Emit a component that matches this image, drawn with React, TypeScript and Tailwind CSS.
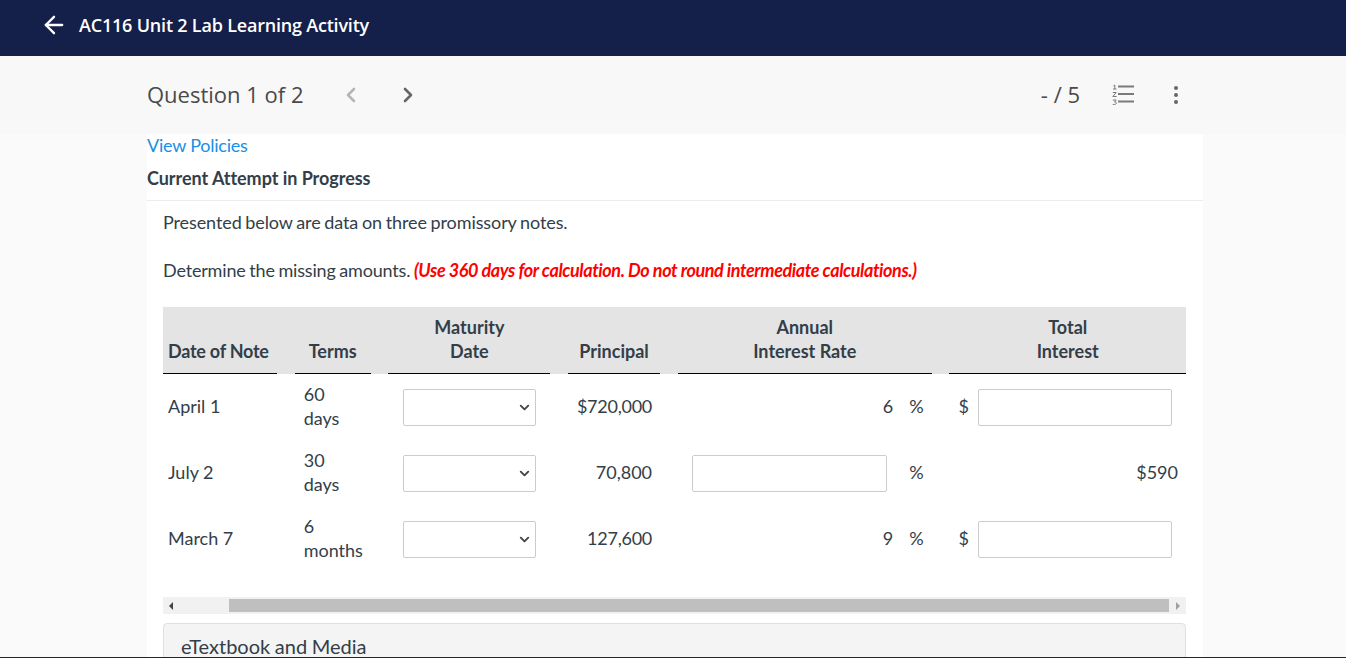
import { ArrowLeft, ChevronLeft, ChevronRight, ChevronDown } from "lucide-react";

const lato = "font-['Lato',sans-serif]";

function SelectBox() {
  return (
    <div className="h-[37px] w-[133px] rounded-[2px] border border-[#cccccc] bg-white flex items-center justify-end pr-[3px]">
      <ChevronDown size={15} strokeWidth={3} className="text-[#444]" />
    </div>
  );
}

function TextBox({ className }: { className: string }) {
  return <div className={`h-[37px] rounded-[2px] border border-[#cccccc] bg-white ${className}`} />;
}

function Terms({ a, b }: { a: string; b: string }) {
  return (
    <div className="pl-[9px] pb-[2px] leading-[24px]">
      <div>{a}</div>
      <div>{b}</div>
    </div>
  );
}

function Rate({ value }: { value: string }) {
  return (
    <div className="flex justify-end items-center pr-[8px] pb-[2px]">
      <span>{value}</span>
      <span className="ml-[16px]">%</span>
    </div>
  );
}

function TotalBox() {
  return (
    <div className="flex items-center justify-end pr-[14px] gap-[9px]">
      <span className="pb-[2px]">$</span>
      <TextBox className="w-[194px]" />
    </div>
  );
}

function ListIcon() {
  return (
    <svg width="22" height="22" viewBox="0 0 22 22" className="text-[#7a7a7a]">
      <path d="M6 2.500h16M6 10h16M6 17.500h16" stroke="currentColor" strokeWidth="2" />
      <path d="M1.500 1.800l1.300-.8v4M1 5h3.500" fill="none" stroke="currentColor" strokeWidth="1" />
      <path d="M.8 8.500h3.400l-3.400 4h3.800" fill="none" stroke="currentColor" strokeWidth="1" />
      <path d="M.8 16h3.400l-1.700 2c1.500 0 2 .5 2 1.200s-1 1.300-3.700 1.300" fill="none" stroke="currentColor" strokeWidth="1" />
    </svg>
  );
}

function DotsIcon() {
  return (
    <div className="flex flex-col gap-[3px]">
      <span className="w-[4px] h-[4px] rounded-full bg-[#666]" />
      <span className="w-[4px] h-[4px] rounded-full bg-[#666]" />
      <span className="w-[4px] h-[4px] rounded-full bg-[#666]" />
    </div>
  );
}

export default function App() {
  const cols = "grid grid-cols-[114px_76px_162px_92px_254px_1fr] gap-x-[17.7px]";
  const head = "border-b border-black pb-[10px] font-bold leading-[24px] text-[#333e48]";
  const money = "text-right pr-[8px] pb-[2px]";
  return (
    <div className={`h-[658px] w-[1346px] overflow-hidden flex flex-col bg-[#fafafa] border-b border-[#4a1030] ${lato}`}>
      <header className="h-[56px] shrink-0 bg-[#14204a] flex items-center pl-[40px] pb-[6px] text-white">
        <ArrowLeft size={28} strokeWidth={2} />
        <span className="ml-[11px] font-['Open_Sans',sans-serif] font-semibold text-[18px] tracking-[-0.2px]">
          AC116 Unit 2 Lab Learning Activity
        </span>
      </header>

      <div className="h-[78px] shrink-0 bg-[#f8f8f8] flex items-center pl-[147px] pr-[168px] pb-[1px] font-['Open_Sans',sans-serif] text-[#4a4a4a]">
        <span className="text-[22px] pb-[1px]">Question 1 of 2</span>
        <ChevronLeft size={24} strokeWidth={2.600} className="ml-[35px] text-[#b5b5b5]" />
        <ChevronRight size={24} strokeWidth={2.600} className="ml-[33px] text-[#666]" />
        <span className="ml-auto text-[22px] pb-[1px]">- / 5</span>
        <span className="ml-[32px]"><ListIcon /></span>
        <span className="ml-[40px]"><DotsIcon /></span>
      </div>

      <main className="w-[1056px] ml-[147px] flex-1 bg-white text-[18px] text-[#333e48]">
        <div className="-mt-[1px]">
          <a href="#" className="block text-[#1a8fe3] leading-[24px] tracking-[-0.23px]">View Policies</a>
          <div className="mt-[9px] font-bold leading-[24px] tracking-[-0.04px]">Current Attempt in Progress</div>
        </div>
        <div className="mt-[10px] border-t border-[#ececec] pl-[16px] pr-[17px]">
          <p className="mt-[9px] leading-[24px] tracking-[-0.1px] [word-spacing:-0.8px]">Presented below are data on three promissory notes.</p>
          <p className="mt-[24px] leading-[24px] tracking-[-0.17px] [word-spacing:-0.8px]">
            Determine the missing amounts.{" "}
            <em className="font-bold text-[#ff0000] tracking-[-0.42px] [word-spacing:0px]">(Use 360 days for calculation. Do not round intermediate calculations.)</em>
          </p>

          <div className="mt-[25px] bg-[#e4e4e4] h-[67px]">
            <div className={`${cols} h-full items-end`}>
              <div className={`${head} pl-[5px] tracking-[-0.25px]`}>Date of Note</div>
              <div className={`${head} text-center`}>Terms</div>
              <div className={`${head} text-center`}>Maturity<br />Date</div>
              <div className={`${head} text-center`}>Principal</div>
              <div className={`${head} text-center`}>Annual<br />Interest Rate</div>
              <div className={`${head} text-center`}>Total<br />Interest</div>
            </div>
          </div>

          <div className={`${cols} auto-rows-[66px] items-center`}>
            <div className="pl-[5px] pb-[2px]">April 1</div>
            <Terms a="60" b="days" />
            <div className="flex justify-center"><SelectBox /></div>
            <div className={`${money} tracking-[-0.25px]`}>$720,000</div>
            <Rate value="6" />
            <TotalBox />

            <div className="pl-[5px] pb-[2px]">July 2</div>
            <Terms a="30" b="days" />
            <div className="flex justify-center"><SelectBox /></div>
            <div className={money}>70,800</div>
            <div className="flex justify-end items-center pr-[8px]">
              <TextBox className="w-[195px]" />
              <span className="ml-[22px] pb-[2px]">%</span>
            </div>
            <div className={money}>$590</div>

            <div className="pl-[5px] pb-[2px]">March 7</div>
            <Terms a="6" b="months" />
            <div className="flex justify-center"><SelectBox /></div>
            <div className={`${money} tracking-[-0.25px]`}>127,600</div>
            <Rate value="9" />
            <TotalBox />
          </div>

          <div className="mt-[25px] h-[17px] bg-[#f1f1f1] flex items-center">
            <div className="w-[66px] pl-[6px] shrink-0">
              <div className="w-0 h-0 border-y-[4px] border-y-transparent border-r-[4px] border-r-[#444]" />
            </div>
            <div className="flex-1 h-[13px] bg-[#bfbfbf]" />
            <div className="w-[17px] pl-[7px] shrink-0">
              <div className="w-0 h-0 border-y-[4px] border-y-transparent border-l-[4px] border-l-[#a0a0a0]" />
            </div>
          </div>

          <div className="mt-[9px] h-[60px] rounded-[4px] border border-[#e0e0e0] bg-[#f4f4f4] pl-[17px] pt-[10px] text-[20px] leading-[24px] [word-spacing:-0.5px]">
            eTextbook and Media
          </div>
        </div>
      </main>
    </div>
  );
}
